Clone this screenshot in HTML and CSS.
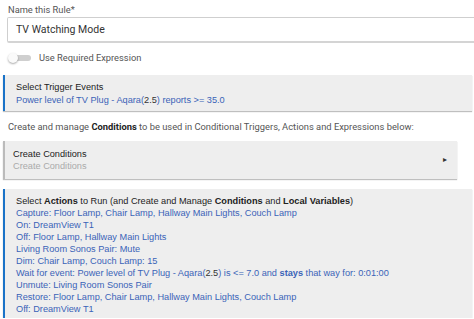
FILE: index.html
```html
<!DOCTYPE html>
<html lang="en">
<head>
    <meta charset="UTF-8">
    <title>Rule Machine</title>
    <link rel="stylesheet" href="styles.css">
</head>
<body>
    <div class="rule">
        <label class="field-label">Name this Rule*</label>
        <div class="text-input">TV Watching Mode</div>

        <div class="switch-row">
            <span class="switch"><span class="knob"></span></span>
            <span>Use Required Expression</span>
        </div>

        <div class="panel panel-active trigger">
            <div class="panel-title">Select Trigger Events</div>
            <div class="link">Power level of TV Plug - Aqara(<span class="num">2.5</span>) reports &gt;= 35.0</div>
        </div>

        <p class="hint">Create and manage <b>Conditions</b> to be used in Conditional Triggers, Actions and Expressions below:</p>

        <div class="panel conditions">
            <div>
                <div class="panel-title">Create Conditions</div>
                <div class="muted">Create Conditions</div>
            </div>
            <span class="arrow">&#9656;</span>
        </div>

        <div class="panel panel-active actions">
            <div class="panel-title">Select <b>Actions</b> to Run (and Create and Manage <b>Conditions</b> and <b>Local Variables</b>)</div>
            <div class="link">Capture: Floor Lamp, Chair Lamp, Hallway Main Lights, Couch Lamp</div>
            <div class="link">On: DreamView T1</div>
            <div class="link">Off: Floor Lamp, Hallway Main Lights</div>
            <div class="link">Living Room Sonos Pair: Mute</div>
            <div class="link">Dim: Chair Lamp, Couch Lamp: 15</div>
            <div class="link">Wait for event: Power level of TV Plug - Aqara(<span class="num">2.5</span>) is &lt;= 7.0 and <b>stays</b> that way for: 0:01:00</div>
            <div class="link">Unmute: Living Room Sonos Pair</div>
            <div class="link">Restore: Floor Lamp, Chair Lamp, Hallway Main Lights, Couch Lamp</div>
            <div class="link">Off: DreamView T1</div>
        </div>
    </div>
</body>
</html>
```

FILE: styles.css
```css
* {
    margin: 0;
    padding: 0;
    box-sizing: border-box;
}

body {
    background: #fff;
    font-family: Roboto, 'Liberation Sans', sans-serif;
    overflow: hidden;
}

.rule {
    padding: 4px 2px 0 3px;
}

.field-label {
    display: block;
    margin-left: 5px;
    font-size: 9.3px;
    line-height: 12px;
    color: #555;
}

.text-input {
    margin: 1px -10px 0 4px;
    height: 26px;
    border: 1px solid #cfcfcf;
    border-bottom: 2px solid #d4d4d4;
    border-radius: 2px;
    padding: 0 0 0 8px;
    font-size: 10.5px;
    line-height: 23px;
    color: #333;
}

.switch-row {
    display: flex;
    align-items: center;
    gap: 8px;
    margin: 8px 0 0 5px;
    height: 14px;
    font-size: 9.3px;
    line-height: 14px;
    color: #555;
}

.switch {
    position: relative;
    width: 18px;
    height: 6px;
    margin-left: 5px;
    border-radius: 3px;
    background: #cfcfcf;
}

.knob {
    position: absolute;
    left: -5px;
    top: -2px;
    width: 10px;
    height: 10px;
    border-radius: 50%;
    background: #fafafa;
    box-shadow: 0 1px 2px rgba(0, 0, 0, 0.35);
}

.panel {
    background: #eee;
    font-family: 'Liberation Sans', Arial, sans-serif;
    font-size: 9.2px;
    color: #222;
    border-left: 2px solid #bbb;
    box-shadow: 0 1px 1px rgba(0, 0, 0, 0.25);
}

.panel-active {
    border-left-color: #1a73c8;
}

.trigger {
    margin-top: 10px;
    padding: 6px 0 4px 11px;
    line-height: 13px;
}

.link {
    color: #3a63b8;
}

.num {
    color: #333;
}

.hint {
    margin: 10px 0 0 5px;
    font-size: 9.35px;
    line-height: 12px;
    color: #555;
}

.hint b {
    color: #222;
    font-weight: 700;
}

.conditions {
    display: flex;
    align-items: center;
    justify-content: space-between;
    width: 454px;
    margin-top: 8px;
    padding: 7px 0 7px 8px;
    line-height: 12px;
}

.muted {
    color: #aaa;
}

.arrow {
    margin-right: 10px;
    font-size: 8px;
    color: #333;
}

.actions {
    margin-top: 10px;
    padding: 6px 0 3px 11px;
    line-height: 12px;
}
```
